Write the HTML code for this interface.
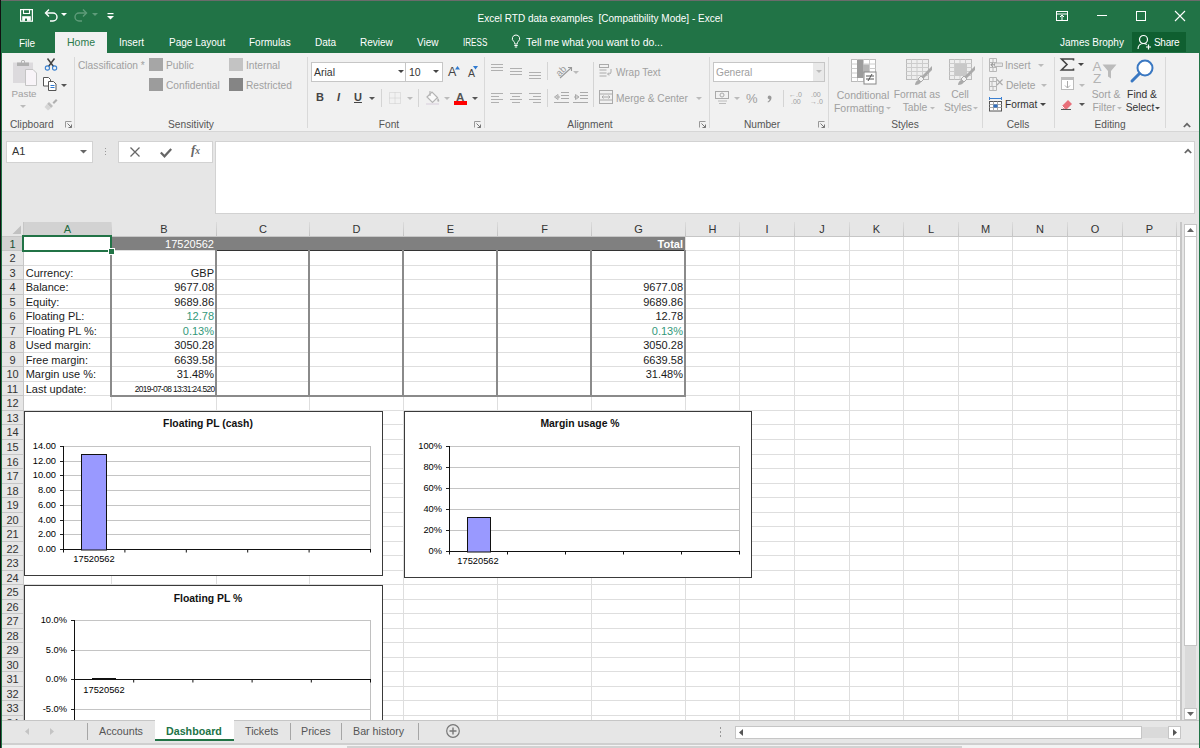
<!DOCTYPE html>
<html><head><meta charset="utf-8"><style>
html,body{margin:0;padding:0;width:1200px;height:748px;overflow:hidden;background:#fff;position:relative}
body{font-family:"Liberation Sans",sans-serif}
.t{position:absolute;white-space:nowrap;line-height:1.15}
svg{overflow:visible}
</style></head><body>
<div style="position:absolute;left:0px;top:0px;width:1200px;height:53px;background:#217346"></div>
<div style="position:absolute;left:0px;top:0px;width:1200px;height:1px;background:#6b6b6b"></div>
<svg style="position:absolute;left:20px;top:9px;" width="13" height="13" viewBox="0 0 13 13"><rect x="0.6" y="0.6" width="11.8" height="11.6" fill="none" stroke="#fff" stroke-width="1.2"/><rect x="3.5" y="0.5" width="6" height="4" fill="none" stroke="#fff" stroke-width="1.1"/><rect x="2.2" y="7.2" width="8.6" height="4.6" fill="#fff"/><rect x="5" y="9.6" width="2" height="2.4" fill="#217346"/></svg>
<svg style="position:absolute;left:44px;top:8px;" width="16" height="14" viewBox="0 0 16 14"><path d="M2 5h7a4 4 0 0 1 0 8H6" fill="none" stroke="#fff" stroke-width="1.4"/><path d="M5 1.5L1.5 5 5 8.5" fill="none" stroke="#fff" stroke-width="1.4"/></svg>
<svg style="position:absolute;left:61px;top:13px;" width="6" height="4" viewBox="0 0 6 4"><path d="M0 0h6l-3 3z" fill="#fff"/></svg>
<svg style="position:absolute;left:74px;top:8px;" width="14" height="14" viewBox="0 0 14 14"><path d="M12 5H5a4 4 0 0 0 0 8h3" fill="none" stroke="#5f9c7a" stroke-width="1.4"/><path d="M9 1.5L12.5 5 9 8.5" fill="none" stroke="#5f9c7a" stroke-width="1.4"/></svg>
<svg style="position:absolute;left:92px;top:13px;" width="6" height="4" viewBox="0 0 6 4"><path d="M0 0h6l-3 3z" fill="#5f9c7a"/></svg>
<svg style="position:absolute;left:107px;top:13px;" width="7" height="8" viewBox="0 0 7 8"><rect x="0.5" y="0" width="6" height="1.2" fill="#fff"/><path d="M0 3h7l-3.5 3.5z" fill="#fff"/></svg>
<div class="t" style="left:450px;width:300px;text-align:center;top:13px;font-size:10px;color:#fff;">Excel RTD data examples&nbsp; [Compatibility Mode] - Excel</div>
<svg style="position:absolute;left:1056px;top:11px;" width="12" height="10" viewBox="0 0 12 10"><rect x="0.5" y="0.5" width="11" height="9" fill="none" stroke="#fff"/><path d="M0.5 3h11M6 4v5.5M4 6l2-2 2 2" fill="none" stroke="#fff"/></svg>
<div style="position:absolute;left:1097px;top:15px;width:10px;height:1px;background:#fff"></div>
<div style="position:absolute;left:1136px;top:11px;width:9.5px;height:9.5px;border:1px solid #fff;box-sizing:border-box"></div>
<svg style="position:absolute;left:1175px;top:11px;" width="10" height="10" viewBox="0 0 10 10"><path d="M0 0L10 10M10 0L0 10" stroke="#fff" stroke-width="1.1"/></svg>
<div class="t" style="left:19px;top:37.5px;font-size:10px;color:#fff;">File</div>
<div class="t" style="left:119px;top:36.8px;font-size:10px;color:#fff;">Insert</div>
<div class="t" style="left:169px;top:36.8px;font-size:10px;color:#fff;">Page Layout</div>
<div class="t" style="left:249px;top:36.8px;font-size:10px;color:#fff;">Formulas</div>
<div class="t" style="left:315px;top:36.8px;font-size:10px;color:#fff;">Data</div>
<div class="t" style="left:360px;top:36.8px;font-size:10px;color:#fff;">Review</div>
<div class="t" style="left:417px;top:36.8px;font-size:10px;color:#fff;">View</div>
<div class="t" style="left:463px;top:36.8px;font-size:10px;color:#fff;transform:scaleX(0.81);transform-origin:0 0">IRESS</div>
<div style="position:absolute;left:55px;top:32px;width:52px;height:22px;background:#f1f1f1"></div>
<div class="t" style="left:67px;top:35.8px;font-size:10.5px;color:#2a7a4c;">Home</div>
<svg style="position:absolute;left:511px;top:34px;" width="10" height="14" viewBox="0 0 10 14"><path d="M5 1a3.6 3.6 0 0 0-2.2 6.5c.6.6.8 1.2.8 2V10h2.8v-.5c0-.8.2-1.4.8-2A3.6 3.6 0 0 0 5 1z" fill="none" stroke="#fff" stroke-width="1"/><path d="M3.3 11.5h3.4M3.8 13h2.4" stroke="#fff"/></svg>
<div class="t" style="left:526px;top:36.5px;font-size:10.4px;color:#fff;">Tell me what you want to do...</div>
<div class="t" style="left:1060px;top:37px;font-size:10px;color:#fff;">James Brophy</div>
<div style="position:absolute;left:1132px;top:32px;width:54px;height:20px;background:#0f5f30"></div>
<svg style="position:absolute;left:1137px;top:34px;" width="15" height="16" viewBox="0 0 15 16"><circle cx="6.5" cy="5.5" r="4" fill="none" stroke="#fff" stroke-width="1.2"/><path d="M1 15c0-3.5 2.5-5.5 5.5-5.5 1.5 0 2.5.4 3.3 1" fill="none" stroke="#fff" stroke-width="1.2"/><path d="M11.5 10.5v5M9 13h5" stroke="#fff" stroke-width="1.2"/></svg>
<div class="t" style="left:1154px;top:37px;font-size:10px;color:#fff;letter-spacing:-0.3px">Share</div>
<div style="position:absolute;left:2px;top:53px;width:1197px;height:78px;background:#f1f1f1"></div>
<div style="position:absolute;left:2px;top:131px;width:1197px;height:1px;background:#d6d6d6"></div>
<div style="position:absolute;left:74px;top:57px;width:1px;height:71px;background:#d9d9d9"></div>
<div style="position:absolute;left:307px;top:57px;width:1px;height:71px;background:#d9d9d9"></div>
<div style="position:absolute;left:484px;top:57px;width:1px;height:71px;background:#d9d9d9"></div>
<div style="position:absolute;left:709px;top:57px;width:1px;height:71px;background:#d9d9d9"></div>
<div style="position:absolute;left:828px;top:57px;width:1px;height:71px;background:#d9d9d9"></div>
<div style="position:absolute;left:982px;top:57px;width:1px;height:71px;background:#d9d9d9"></div>
<div style="position:absolute;left:1054px;top:57px;width:1px;height:71px;background:#d9d9d9"></div>
<div style="position:absolute;left:1165px;top:57px;width:1px;height:71px;background:#d9d9d9"></div>
<div class="t" style="left:10px;top:119px;font-size:10.2px;color:#555;">Clipboard</div>
<div class="t" style="left:41px;width:300px;text-align:center;top:119px;font-size:10.2px;color:#555;">Sensitivity</div>
<div class="t" style="left:239px;width:300px;text-align:center;top:119px;font-size:10.2px;color:#555;">Font</div>
<div class="t" style="left:440px;width:300px;text-align:center;top:119px;font-size:10.2px;color:#555;">Alignment</div>
<div class="t" style="left:612px;width:300px;text-align:center;top:119px;font-size:10.2px;color:#555;">Number</div>
<div class="t" style="left:755px;width:300px;text-align:center;top:119px;font-size:10.2px;color:#555;">Styles</div>
<div class="t" style="left:868px;width:300px;text-align:center;top:119px;font-size:10.2px;color:#555;">Cells</div>
<div class="t" style="left:960px;width:300px;text-align:center;top:119px;font-size:10.2px;color:#555;">Editing</div>
<svg style="position:absolute;left:65px;top:121px;" width="7" height="7" viewBox="0 0 7 7"><path d="M0.5 6.5V0.5h6" fill="none" stroke="#999"/><path d="M2.5 2.5L6.5 6.5M3.5 6.5h3v-3" fill="none" stroke="#777"/></svg>
<svg style="position:absolute;left:474px;top:121px;" width="7" height="7" viewBox="0 0 7 7"><path d="M0.5 6.5V0.5h6" fill="none" stroke="#999"/><path d="M2.5 2.5L6.5 6.5M3.5 6.5h3v-3" fill="none" stroke="#777"/></svg>
<svg style="position:absolute;left:699px;top:121px;" width="7" height="7" viewBox="0 0 7 7"><path d="M0.5 6.5V0.5h6" fill="none" stroke="#999"/><path d="M2.5 2.5L6.5 6.5M3.5 6.5h3v-3" fill="none" stroke="#777"/></svg>
<svg style="position:absolute;left:818px;top:121px;" width="7" height="7" viewBox="0 0 7 7"><path d="M0.5 6.5V0.5h6" fill="none" stroke="#999"/><path d="M2.5 2.5L6.5 6.5M3.5 6.5h3v-3" fill="none" stroke="#777"/></svg>
<svg style="position:absolute;left:1183px;top:122px;" width="8" height="6" viewBox="0 0 8 6"><path d="M0.8 5L4 1.8 7.2 5" fill="none" stroke="#666" stroke-width="1.7"/></svg>
<svg style="position:absolute;left:13px;top:60px;" width="25" height="26" viewBox="0 0 25 26"><path d="M0 2.5h20v20.5H0z" fill="#dcdadd"/><path d="M4 2.5h12v3.5H4z" fill="#b0b0b0"/><rect x="8" y="0" width="4" height="3.5" rx="1.5" fill="#b0b0b0"/><rect x="9" y="1" width="2" height="1.6" fill="#f1f1f1"/><path d="M12.5 9.5h7.5l3.5 3.5v12.5h-11z" fill="#f8f4f8" stroke="#c4c4c4"/></svg>
<div class="t" style="left:11.5px;top:88.3px;font-size:9.8px;color:#a0a0a0;">Paste</div>
<svg style="position:absolute;left:20px;top:105px;" width="6" height="4" viewBox="0 0 6 4"><path d="M0 0h6l-3 3z" fill="#bbb"/></svg>
<svg style="position:absolute;left:44px;top:58px;" width="14" height="13" viewBox="0 0 14 13"><path d="M3.5 0.5L9.5 8.5M10.5 0.5L4.5 8.5" stroke="#444" stroke-width="1.5"/><circle cx="3.4" cy="10" r="2.1" fill="none" stroke="#3b82d0" stroke-width="1.1"/><circle cx="10.6" cy="10" r="2.1" fill="none" stroke="#3b82d0" stroke-width="1.1"/></svg>
<svg style="position:absolute;left:43px;top:77px;" width="14" height="14" viewBox="0 0 14 14"><path d="M0.5 0.5h5l2 2V9H0.5z" fill="#fff" stroke="#555"/><path d="M5.5 4.5h5l2.5 2.5v6.5H5.5z" fill="#fff" stroke="#555"/><path d="M7.5 8.5h4M7.5 10.5h4" stroke="#2f7ad1"/></svg>
<svg style="position:absolute;left:61px;top:84px;" width="6" height="4" viewBox="0 0 6 4"><path d="M0 0h6l-3 3z" fill="#555"/></svg>
<svg style="position:absolute;left:44px;top:97px;" width="14" height="14" viewBox="0 0 14 14"><path d="M8.5 5.5L12 2l1.5 1.5L10 7z" fill="#b0b0b0"/><path d="M5 5l4 4-2 2-4-4z" fill="#bdbdbd"/><path d="M3 7l4 4-3 2.5L0.5 10z" fill="#d6d6d6"/></svg>
<div class="t" style="left:78px;top:60px;font-size:10.2px;color:#a0a0a0;">Classification *</div>
<div style="position:absolute;left:149px;top:58px;width:14px;height:13px;background:#a6a6a6"></div>
<div class="t" style="left:166px;top:60px;font-size:10.2px;color:#a0a0a0;">Public</div>
<div style="position:absolute;left:229px;top:58px;width:14px;height:13px;background:#c3c3c3"></div>
<div class="t" style="left:246px;top:60px;font-size:10.2px;color:#a0a0a0;">Internal</div>
<div style="position:absolute;left:149px;top:78px;width:14px;height:13px;background:#9c9c9c"></div>
<div class="t" style="left:166px;top:80px;font-size:10.2px;color:#a0a0a0;">Confidential</div>
<div style="position:absolute;left:229px;top:78px;width:14px;height:13px;background:#858585"></div>
<div class="t" style="left:246px;top:80px;font-size:10.2px;color:#a0a0a0;">Restricted</div>
<div style="position:absolute;left:311px;top:62px;width:95px;height:20px;background:#fff;border:1px solid #c6c6c6;box-sizing:border-box"></div>
<div class="t" style="left:314px;top:66px;font-size:10.5px;color:#333;">Arial</div>
<svg style="position:absolute;left:398px;top:70px;" width="6" height="4" viewBox="0 0 6 4"><path d="M0 0h6l-3 3z" fill="#444"/></svg>
<div style="position:absolute;left:405px;top:62px;width:38px;height:20px;background:#fff;border:1px solid #c6c6c6;box-sizing:border-box"></div>
<div class="t" style="left:409px;top:66px;font-size:10.5px;color:#333;">10</div>
<svg style="position:absolute;left:433px;top:70px;" width="6" height="4" viewBox="0 0 6 4"><path d="M0 0h6l-3 3z" fill="#444"/></svg>
<div class="t" style="left:448px;top:65px;font-size:12.5px;color:#444;">A</div>
<svg style="position:absolute;left:455px;top:65.5px;" width="5" height="4" viewBox="0 0 5 4"><path d="M0 3.5L2.5 0 5 3.5z" fill="#2f7ad1"/></svg>
<div class="t" style="left:468px;top:67px;font-size:10.5px;color:#444;">A</div>
<svg style="position:absolute;left:473px;top:65.5px;" width="5" height="4" viewBox="0 0 5 4"><path d="M0 0h5L2.5 3.5z" fill="#2f7ad1"/></svg>
<div class="t" style="left:316px;top:91px;font-size:11px;color:#444;font-weight:bold">B</div>
<div class="t" style="left:337px;top:91px;font-size:11px;color:#444;font-style:italic;font-weight:bold">I</div>
<div class="t" style="left:354px;top:91px;font-size:11px;color:#444;text-decoration:underline;font-weight:bold">U</div>
<svg style="position:absolute;left:369px;top:97px;" width="6" height="4" viewBox="0 0 6 4"><path d="M0 0h6l-3 3z" fill="#555"/></svg>
<div style="position:absolute;left:381px;top:89px;width:1px;height:18px;background:#d4d4d4"></div>
<svg style="position:absolute;left:389px;top:92px;" width="12" height="12" viewBox="0 0 12 12"><rect x="0.5" y="0.5" width="11" height="11" fill="none" stroke="#ccc" stroke-dasharray="1 1"/><path d="M6 0.5v11M0.5 6h11" stroke="#ccc" stroke-dasharray="1 1"/></svg>
<svg style="position:absolute;left:407px;top:97px;" width="6" height="4" viewBox="0 0 6 4"><path d="M0 0h6l-3 3z" fill="#bbb"/></svg>
<div style="position:absolute;left:418px;top:89px;width:1px;height:18px;background:#d4d4d4"></div>
<svg style="position:absolute;left:425px;top:90px;" width="16" height="16" viewBox="0 0 16 16"><path d="M2 7l5-5 5.5 5.5-5 5z" fill="#fafafa" stroke="#b4b4b4" stroke-width="1.2"/><path d="M5 1v5" stroke="#b4b4b4" stroke-width="1.2"/><path d="M12.5 7.5c1.2 1.3 1.8 2.5 1.8 3.3a1 1 0 0 1-2 0c0-.8.2-1.6.2-3.3z" fill="#b4b4b4"/><rect x="1" y="13" width="13" height="2" fill="#e4dfe6"/></svg>
<svg style="position:absolute;left:444px;top:97px;" width="6" height="4" viewBox="0 0 6 4"><path d="M0 0h6l-3 3z" fill="#bbb"/></svg>
<div class="t" style="left:456px;top:91px;font-size:11.5px;color:#555;font-weight:bold">A</div>
<div style="position:absolute;left:454px;top:101px;width:13px;height:3.5px;background:#ff0000"></div>
<svg style="position:absolute;left:472px;top:97px;" width="6" height="4" viewBox="0 0 6 4"><path d="M0 0h6l-3 3z" fill="#555"/></svg>
<svg style="position:absolute;left:491px;top:64px;" width="14" height="9" viewBox="0 0 14 9"><rect x="0" y="0" width="12" height="1" fill="#b0b0b0"/><rect x="0" y="3" width="12" height="1" fill="#b0b0b0"/><rect x="0" y="6" width="12" height="1" fill="#b0b0b0"/></svg>
<svg style="position:absolute;left:510px;top:68px;" width="14" height="9" viewBox="0 0 14 9"><rect x="0" y="0" width="12" height="1" fill="#b0b0b0"/><rect x="0" y="3" width="12" height="1" fill="#b0b0b0"/><rect x="0" y="6" width="12" height="1" fill="#b0b0b0"/></svg>
<svg style="position:absolute;left:529px;top:72px;" width="14" height="9" viewBox="0 0 14 9"><rect x="0" y="0" width="12" height="1" fill="#b0b0b0"/><rect x="0" y="3" width="12" height="1" fill="#b0b0b0"/><rect x="0" y="6" width="12" height="1" fill="#b0b0b0"/></svg>
<svg style="position:absolute;left:491px;top:93px;" width="14" height="12" viewBox="0 0 14 12"><rect x="0" y="0" width="12" height="1" fill="#b0b0b0"/><rect x="0" y="3" width="8" height="1" fill="#b0b0b0"/><rect x="0" y="6" width="12" height="1" fill="#b0b0b0"/><rect x="0" y="9" width="8" height="1" fill="#b0b0b0"/></svg>
<svg style="position:absolute;left:510px;top:93px;" width="14" height="12" viewBox="0 0 14 12"><rect x="0" y="0" width="12" height="1" fill="#b0b0b0"/><rect x="2" y="3" width="8" height="1" fill="#b0b0b0"/><rect x="0" y="6" width="12" height="1" fill="#b0b0b0"/><rect x="2" y="9" width="8" height="1" fill="#b0b0b0"/></svg>
<svg style="position:absolute;left:529px;top:93px;" width="14" height="12" viewBox="0 0 14 12"><rect x="0" y="0" width="12" height="1" fill="#b0b0b0"/><rect x="4" y="3" width="8" height="1" fill="#b0b0b0"/><rect x="0" y="6" width="12" height="1" fill="#b0b0b0"/><rect x="4" y="9" width="8" height="1" fill="#b0b0b0"/></svg>
<div style="position:absolute;left:547px;top:62px;width:1px;height:18px;background:#d4d4d4"></div>
<div style="position:absolute;left:547px;top:89px;width:1px;height:18px;background:#d4d4d4"></div>
<svg style="position:absolute;left:555px;top:63px;" width="17" height="15" viewBox="0 0 17 15"><text x="0" y="11" font-size="9.5" font-family="Liberation Sans" fill="#999" transform="rotate(-45 6 7)">ab</text><path d="M5 15L16 5M13 4.5H16.5V8" fill="none" stroke="#999" stroke-width="1.1"/></svg>
<svg style="position:absolute;left:573px;top:71px;" width="6" height="4" viewBox="0 0 6 4"><path d="M0 0h6l-3 3z" fill="#bbb"/></svg>
<svg style="position:absolute;left:554px;top:92px;" width="15" height="12" viewBox="0 0 15 12"><path d="M7 0.5h8M7 3.5h8M7 6.5h8M0 10.5h15M0.5 5L4 2.5v5z M2 5h4" fill="none" stroke="#aaa"/></svg>
<svg style="position:absolute;left:573px;top:92px;" width="15" height="12" viewBox="0 0 15 12"><path d="M7 0.5h8M7 3.5h8M7 6.5h8M0 10.5h15M6 5L2.5 2.5v5z M1 5h4" fill="none" stroke="#aaa"/></svg>
<div style="position:absolute;left:593px;top:62px;width:1px;height:45px;background:#d4d4d4"></div>
<svg style="position:absolute;left:599px;top:64px;" width="14" height="14" viewBox="0 0 14 14"><rect x="0.5" y="0.5" width="9" height="3" fill="none" stroke="#aaa"/><path d="M0.5 6h7M0.5 9h7M0.5 12h7M12 5v3a2 2 0 0 1-2 2H9M10 8.5L8.5 10 10 11.5" fill="none" stroke="#aaa"/></svg>
<div class="t" style="left:616px;top:67px;font-size:10px;color:#a0a0a0;">Wrap Text</div>
<svg style="position:absolute;left:599px;top:90px;" width="14" height="14" viewBox="0 0 14 14"><rect x="0.5" y="0.5" width="13" height="13" fill="none" stroke="#aaa"/><path d="M0.5 4h13M0.5 10h13M3 7h8M4.5 5.5L3 7l1.5 1.5M9.5 5.5L11 7 9.5 8.5" fill="none" stroke="#aaa"/></svg>
<div class="t" style="left:616px;top:93px;font-size:10.2px;color:#a0a0a0;">Merge &amp; Center</div>
<svg style="position:absolute;left:696px;top:97px;" width="6" height="4" viewBox="0 0 6 4"><path d="M0 0h6l-3 3z" fill="#bbb"/></svg>
<div style="position:absolute;left:713px;top:62px;width:112px;height:20px;background:#fff;border:1px solid #c6c6c6;box-sizing:border-box"></div>
<div style="position:absolute;left:813px;top:63px;width:11px;height:18px;background:#e9e9e9"></div>
<div class="t" style="left:716px;top:67px;font-size:10.2px;color:#a0a0a0;">General</div>
<svg style="position:absolute;left:816px;top:70px;" width="6" height="4" viewBox="0 0 6 4"><path d="M0 0h6l-3 3z" fill="#bbb"/></svg>
<svg style="position:absolute;left:715px;top:91px;" width="15" height="14" viewBox="0 0 15 14"><rect x="0.5" y="0.5" width="13" height="7" fill="none" stroke="#aaa"/><circle cx="7" cy="4" r="2" fill="none" stroke="#aaa"/><path d="M3 10h9M4 12.5h7" stroke="#bbb"/></svg>
<svg style="position:absolute;left:734px;top:97px;" width="6" height="4" viewBox="0 0 6 4"><path d="M0 0h6l-3 3z" fill="#bbb"/></svg>
<div class="t" style="left:746px;top:91.5px;font-size:13px;color:#a0a0a0;">%</div>
<svg style="position:absolute;left:766px;top:95px;" width="6" height="8" viewBox="0 0 6 8"><path d="M3.2 0.5c1.6 0 2.3 1 2.3 2.2 0 2-1.3 3.8-3.5 4.8l-.5-.8c1.2-.7 2-1.5 2-2.5-.9 0-1.8-.6-1.8-1.7 0-1.1.8-2 1.5-2z" fill="#999"/></svg>
<div style="position:absolute;left:783px;top:90px;width:1px;height:17px;background:#d4d4d4"></div>
<div class="t" style="left:789px;top:91px;font-size:7px;color:#a0a0a0;">&#8592;.0</div>
<div class="t" style="left:791px;top:98px;font-size:7px;color:#a0a0a0;">.00</div>
<div class="t" style="left:811px;top:91px;font-size:7px;color:#a0a0a0;">.00</div>
<div class="t" style="left:810px;top:98px;font-size:7px;color:#a0a0a0;">&#8594;.0</div>
<svg style="position:absolute;left:851px;top:59px;" width="26" height="26" viewBox="0 0 26 26"><rect x="0.5" y="0.5" width="24" height="22" fill="#fff" stroke="#bbb"/><path d="M6.5 0.5v22" stroke="#ccc"/><path d="M12.5 0.5v22" stroke="#ccc"/><path d="M18.5 0.5v22" stroke="#ccc"/><path d="M0.5 5.0h24" stroke="#ccc"/><path d="M0.5 9.5h24" stroke="#ccc"/><path d="M0.5 14.0h24" stroke="#ccc"/><path d="M0.5 18.5h24" stroke="#ccc"/><rect x="6" y="1" width="6" height="18" fill="#9c9c9c"/><rect x="12" y="5.5" width="6" height="9" fill="#b5b5b5"/><rect x="13" y="13" width="12" height="12" fill="#fff" stroke="#888"/><path d="M15 17h8M15 20h8M21 15l-4 7" stroke="#555"/></svg>
<svg style="position:absolute;left:906px;top:59px;" width="27" height="27" viewBox="0 0 27 27"><rect x="0.5" y="0.5" width="22" height="20" fill="#eee" stroke="#bbb"/><path d="M5.5 0.5v20" stroke="#ccc"/><path d="M11.0 0.5v20" stroke="#ccc"/><path d="M16.5 0.5v20" stroke="#ccc"/><path d="M0.5 4.5h22" stroke="#ccc"/><path d="M0.5 8.5h22" stroke="#ccc"/><path d="M0.5 12.5h22" stroke="#ccc"/><path d="M0.5 16.5h22" stroke="#ccc"/><path d="M15 18L26 7v4L17 20z" fill="#aaa"/><path d="M12 20l3-3 3 3-3 3z" fill="#f1f1f1" stroke="#aaa"/><path d="M9 26c0-3 2-5 4-5l2 2c-1 2-3 3-6 3z" fill="#aaa"/></svg>
<svg style="position:absolute;left:949px;top:59px;" width="27" height="27" viewBox="0 0 27 27"><rect x="0.5" y="0.5" width="22" height="20" fill="#eee" stroke="#bbb"/><path d="M5.5 0.5v20" stroke="#ccc"/><path d="M11.0 0.5v20" stroke="#ccc"/><path d="M16.5 0.5v20" stroke="#ccc"/><path d="M0.5 4.5h22" stroke="#ccc"/><path d="M0.5 8.5h22" stroke="#ccc"/><path d="M0.5 12.5h22" stroke="#ccc"/><path d="M0.5 16.5h22" stroke="#ccc"/><rect x="6" y="5" width="12" height="12" fill="#c8c8c8"/><path d="M15 18L26 7v4L17 20z" fill="#aaa"/><path d="M12 20l3-3 3 3-3 3z" fill="#f1f1f1" stroke="#aaa"/><path d="M9 26c0-3 2-5 4-5l2 2c-1 2-3 3-6 3z" fill="#aaa"/></svg>
<div class="t" style="left:713px;width:300px;text-align:center;top:89px;font-size:10.5px;color:#a0a0a0;">Conditional</div>
<div class="t" style="left:709px;width:300px;text-align:center;top:102px;font-size:10.5px;color:#a0a0a0;">Formatting</div>
<div class="t" style="left:767px;width:300px;text-align:center;top:89px;font-size:10.3px;color:#a0a0a0;">Format as</div>
<div class="t" style="left:765px;width:300px;text-align:center;top:102px;font-size:10.3px;color:#a0a0a0;">Table</div>
<div class="t" style="left:810px;width:300px;text-align:center;top:89px;font-size:10.3px;color:#a0a0a0;">Cell</div>
<div class="t" style="left:808px;width:300px;text-align:center;top:102px;font-size:10.3px;color:#a0a0a0;">Styles</div>
<svg style="position:absolute;left:886px;top:107px;" width="5" height="3" viewBox="0 0 5 3"><path d="M0 0h5l-2.5 2.5z" fill="#bbb"/></svg>
<svg style="position:absolute;left:930px;top:107px;" width="5" height="3" viewBox="0 0 5 3"><path d="M0 0h5l-2.5 2.5z" fill="#bbb"/></svg>
<svg style="position:absolute;left:973px;top:107px;" width="5" height="3" viewBox="0 0 5 3"><path d="M0 0h5l-2.5 2.5z" fill="#bbb"/></svg>
<svg style="position:absolute;left:989px;top:58px;" width="15" height="14" viewBox="0 0 15 14"><path d="M0.5 0.5h7v13h-7zM0.5 4.5h7M0.5 9.5h7M4 0.5v4M4 9.5v4" fill="none" stroke="#b8b8b8"/><path d="M5.5 5h8v3.5h-8z" fill="#e6e6e6" stroke="#b8b8b8"/><path d="M2 6.8h4M4 4.8L2 6.8 4 8.8" fill="none" stroke="#999" stroke-width="1.1"/></svg>
<div class="t" style="left:1005px;top:60px;font-size:10.2px;color:#a0a0a0;">Insert</div>
<svg style="position:absolute;left:1038px;top:64px;" width="6" height="4" viewBox="0 0 6 4"><path d="M0 0h6l-3 3z" fill="#bbb"/></svg>
<svg style="position:absolute;left:989px;top:77px;" width="15" height="14" viewBox="0 0 15 14"><path d="M0.5 0.5h7v13h-7zM0.5 4.5h7M0.5 9.5h7M4 0.5v4M4 9.5v4M3 5v4" fill="none" stroke="#b8b8b8"/><path d="M8 2.5l5.5 5.5M13.5 2.5L8 8" stroke="#aaa" stroke-width="1.1"/></svg>
<div class="t" style="left:1006px;top:80px;font-size:10.2px;color:#a0a0a0;">Delete</div>
<svg style="position:absolute;left:1041px;top:84px;" width="6" height="4" viewBox="0 0 6 4"><path d="M0 0h6l-3 3z" fill="#bbb"/></svg>
<svg style="position:absolute;left:989px;top:97px;" width="14" height="15" viewBox="0 0 14 15"><path d="M0.5 1.5h12M0.5 0v3M12.5 0v3" stroke="#3b7fd0"/><rect x="0.5" y="4.5" width="12" height="9.5" fill="#fff" stroke="#555"/><path d="M0.5 7.5h12M0.5 10.5h12M4.5 4.5v9.5M8.5 4.5v9.5" stroke="#aaa"/><rect x="4.5" y="7.5" width="4" height="3" fill="#2f6fc0"/></svg>
<div class="t" style="left:1005px;top:99px;font-size:10.2px;color:#333;">Format</div>
<svg style="position:absolute;left:1040px;top:103px;" width="6" height="4" viewBox="0 0 6 4"><path d="M0 0h6l-3 3z" fill="#444"/></svg>
<svg style="position:absolute;left:1060px;top:58px;" width="15" height="13" viewBox="0 0 15 13"><path d="M13.5 2.5V1H1.5L7 6.5 1.5 12h12v-1.5" fill="none" stroke="#444" stroke-width="1.6" stroke-linejoin="miter"/></svg>
<svg style="position:absolute;left:1078px;top:63px;" width="6" height="4" viewBox="0 0 6 4"><path d="M0 0h6l-3 3z" fill="#444"/></svg>
<svg style="position:absolute;left:1061px;top:77px;" width="14" height="14" viewBox="0 0 14 14"><rect x="0.5" y="0.5" width="12" height="12" fill="#fff" stroke="#bbb"/><rect x="0.5" y="0.5" width="12" height="2.5" fill="#bbb"/><path d="M6.5 4v7M4 8.5l2.5 2.5 2.5-2.5" fill="none" stroke="#aaa"/></svg>
<svg style="position:absolute;left:1079px;top:84px;" width="6" height="4" viewBox="0 0 6 4"><path d="M0 0h6l-3 3z" fill="#bbb"/></svg>
<svg style="position:absolute;left:1061px;top:98px;" width="14" height="12" viewBox="0 0 14 12"><path d="M1 8l6-6 4 4-6 6H3z" fill="#e8707a"/><path d="M1 8l2.5 2.5" stroke="#fff"/><path d="M0 11.5h10" stroke="#555"/></svg>
<svg style="position:absolute;left:1079px;top:103px;" width="6" height="4" viewBox="0 0 6 4"><path d="M0 0h6l-3 3z" fill="#555"/></svg>
<div class="t" style="left:1092.5px;top:58.5px;font-size:13.5px;color:#b4b4b4;">A</div>
<div class="t" style="left:1093px;top:70.5px;font-size:13.5px;color:#b4b4b4;">Z</div>
<svg style="position:absolute;left:1102px;top:64px;" width="15" height="15" viewBox="0 0 15 15"><path d="M0.5 0.5h14L9 7v7.5L6 12.5V7z" fill="#bbb"/></svg>
<div class="t" style="left:956px;width:300px;text-align:center;top:89px;font-size:10.3px;color:#a0a0a0;">Sort &amp;</div>
<div class="t" style="left:954px;width:300px;text-align:center;top:102px;font-size:10.3px;color:#a0a0a0;">Filter</div>
<svg style="position:absolute;left:1117px;top:107px;" width="5" height="3" viewBox="0 0 5 3"><path d="M0 0h5l-2.5 2.5z" fill="#bbb"/></svg>
<svg style="position:absolute;left:1130px;top:59px;" width="25" height="23" viewBox="0 0 25 23"><circle cx="15" cy="9" r="7.5" fill="#fff" stroke="#3a78c2" stroke-width="2"/><path d="M9.5 14.5L2 22" stroke="#3a78c2" stroke-width="3" stroke-linecap="round"/></svg>
<div class="t" style="left:992px;width:300px;text-align:center;top:89px;font-size:10.3px;color:#333;">Find &amp;</div>
<div class="t" style="left:990px;width:300px;text-align:center;top:102px;font-size:10.3px;color:#333;">Select</div>
<svg style="position:absolute;left:1155px;top:107px;" width="5" height="3" viewBox="0 0 5 3"><path d="M0 0h5l-2.5 2.5z" fill="#444"/></svg>
<div style="position:absolute;left:2px;top:132px;width:1197px;height:90px;background:#e6e6e6"></div>
<div style="position:absolute;left:6px;top:141px;width:87px;height:22px;background:#fff;border:1px solid #d2d2d2;box-sizing:border-box"></div>
<div class="t" style="left:12px;top:145px;font-size:11px;color:#333;">A1</div>
<svg style="position:absolute;left:80px;top:150px;" width="7" height="4" viewBox="0 0 7 4"><path d="M0 0h7l-3.5 3.5z" fill="#666"/></svg>
<div style="position:absolute;left:105px;top:148px;width:1px;height:1px;background:#999"></div>
<div style="position:absolute;left:105px;top:151px;width:1px;height:1px;background:#999"></div>
<div style="position:absolute;left:105px;top:154px;width:1px;height:1px;background:#999"></div>
<div style="position:absolute;left:118px;top:141px;width:95px;height:22px;background:#fff;border:1px solid #d2d2d2;box-sizing:border-box"></div>
<svg style="position:absolute;left:130px;top:147px;" width="10" height="10" viewBox="0 0 10 10"><path d="M0.5 0.5L9.5 9.5M9.5 0.5L0.5 9.5" stroke="#666" stroke-width="1.3"/></svg>
<svg style="position:absolute;left:160px;top:148px;" width="12" height="10" viewBox="0 0 12 10"><path d="M0.8 4.5L4.5 8.3 11.2 1" fill="none" stroke="#666" stroke-width="2.2"/></svg>
<div class="t" style="left:191px;top:143px;font-size:13px;color:#666;font-style:italic;font-weight:bold;font-family:'Liberation Serif',serif">f<span style='font-size:9.5px'>x</span></div>
<div style="position:absolute;left:215px;top:141px;width:980px;height:73px;background:#fff;border:1px solid #d2d2d2;box-sizing:border-box"></div>
<svg style="position:absolute;left:1184px;top:147.5px;" width="8" height="6" viewBox="0 0 8 6"><path d="M0.8 5L4 1.8 7.2 5" fill="none" stroke="#666" stroke-width="1.7"/></svg>
<div style="position:absolute;left:2px;top:222px;width:1180px;height:14px;background:#e6e6e6"></div>
<div style="position:absolute;left:2px;top:236px;width:21px;height:484px;background:#e6e6e6"></div>
<div style="position:absolute;left:24px;top:237px;width:1156px;height:483px;background:#fff"></div>
<div style="position:absolute;left:24px;top:222px;width:87px;height:14px;background:#d2d2d2"></div>
<div style="position:absolute;left:2px;top:237px;width:21px;height:13px;background:#d2d2d2"></div>
<div style="position:absolute;left:2px;top:236px;width:1179px;height:1px;background:#c6c6c6"></div>
<div style="position:absolute;left:23px;top:222px;width:1px;height:498px;background:#c6c6c6"></div>
<svg style="position:absolute;left:12px;top:225px;" width="10" height="10" viewBox="0 0 10 10"><path d="M9 0.5V9H0.5z" fill="#c1c1c1"/></svg>
<div style="position:absolute;left:111px;top:222px;width:1px;height:14px;background:linear-gradient(#dcdcdc,#c4c4c4)"></div>
<div style="position:absolute;left:111px;top:237px;width:1px;height:483px;background:#dedede"></div>
<div style="position:absolute;left:216px;top:222px;width:1px;height:14px;background:linear-gradient(#dcdcdc,#c4c4c4)"></div>
<div style="position:absolute;left:216px;top:237px;width:1px;height:483px;background:#dedede"></div>
<div style="position:absolute;left:309px;top:222px;width:1px;height:14px;background:linear-gradient(#dcdcdc,#c4c4c4)"></div>
<div style="position:absolute;left:309px;top:237px;width:1px;height:483px;background:#dedede"></div>
<div style="position:absolute;left:403px;top:222px;width:1px;height:14px;background:linear-gradient(#dcdcdc,#c4c4c4)"></div>
<div style="position:absolute;left:403px;top:237px;width:1px;height:483px;background:#dedede"></div>
<div style="position:absolute;left:497px;top:222px;width:1px;height:14px;background:linear-gradient(#dcdcdc,#c4c4c4)"></div>
<div style="position:absolute;left:497px;top:237px;width:1px;height:483px;background:#dedede"></div>
<div style="position:absolute;left:591px;top:222px;width:1px;height:14px;background:linear-gradient(#dcdcdc,#c4c4c4)"></div>
<div style="position:absolute;left:591px;top:237px;width:1px;height:483px;background:#dedede"></div>
<div style="position:absolute;left:685px;top:222px;width:1px;height:14px;background:linear-gradient(#dcdcdc,#c4c4c4)"></div>
<div style="position:absolute;left:685px;top:237px;width:1px;height:483px;background:#dedede"></div>
<div style="position:absolute;left:739px;top:222px;width:1px;height:14px;background:linear-gradient(#dcdcdc,#c4c4c4)"></div>
<div style="position:absolute;left:739px;top:237px;width:1px;height:483px;background:#dedede"></div>
<div style="position:absolute;left:794px;top:222px;width:1px;height:14px;background:linear-gradient(#dcdcdc,#c4c4c4)"></div>
<div style="position:absolute;left:794px;top:237px;width:1px;height:483px;background:#dedede"></div>
<div style="position:absolute;left:849px;top:222px;width:1px;height:14px;background:linear-gradient(#dcdcdc,#c4c4c4)"></div>
<div style="position:absolute;left:849px;top:237px;width:1px;height:483px;background:#dedede"></div>
<div style="position:absolute;left:903px;top:222px;width:1px;height:14px;background:linear-gradient(#dcdcdc,#c4c4c4)"></div>
<div style="position:absolute;left:903px;top:237px;width:1px;height:483px;background:#dedede"></div>
<div style="position:absolute;left:958px;top:222px;width:1px;height:14px;background:linear-gradient(#dcdcdc,#c4c4c4)"></div>
<div style="position:absolute;left:958px;top:237px;width:1px;height:483px;background:#dedede"></div>
<div style="position:absolute;left:1012px;top:222px;width:1px;height:14px;background:linear-gradient(#dcdcdc,#c4c4c4)"></div>
<div style="position:absolute;left:1012px;top:237px;width:1px;height:483px;background:#dedede"></div>
<div style="position:absolute;left:1067px;top:222px;width:1px;height:14px;background:linear-gradient(#dcdcdc,#c4c4c4)"></div>
<div style="position:absolute;left:1067px;top:237px;width:1px;height:483px;background:#dedede"></div>
<div style="position:absolute;left:1122px;top:222px;width:1px;height:14px;background:linear-gradient(#dcdcdc,#c4c4c4)"></div>
<div style="position:absolute;left:1122px;top:237px;width:1px;height:483px;background:#dedede"></div>
<div style="position:absolute;left:1176px;top:222px;width:1px;height:14px;background:linear-gradient(#dcdcdc,#c4c4c4)"></div>
<div style="position:absolute;left:1176px;top:237px;width:1px;height:483px;background:#dedede"></div>
<div class="t" style="left:-82.5px;width:300px;text-align:center;top:222.5px;font-size:11px;color:#1e6b3e;">A</div>
<div class="t" style="left:14.0px;width:300px;text-align:center;top:222.5px;font-size:11px;color:#333;">B</div>
<div class="t" style="left:113.0px;width:300px;text-align:center;top:222.5px;font-size:11px;color:#333;">C</div>
<div class="t" style="left:206.5px;width:300px;text-align:center;top:222.5px;font-size:11px;color:#333;">D</div>
<div class="t" style="left:300.5px;width:300px;text-align:center;top:222.5px;font-size:11px;color:#333;">E</div>
<div class="t" style="left:394.5px;width:300px;text-align:center;top:222.5px;font-size:11px;color:#333;">F</div>
<div class="t" style="left:488.5px;width:300px;text-align:center;top:222.5px;font-size:11px;color:#333;">G</div>
<div class="t" style="left:562.5px;width:300px;text-align:center;top:222.5px;font-size:11px;color:#333;">H</div>
<div class="t" style="left:617.0px;width:300px;text-align:center;top:222.5px;font-size:11px;color:#333;">I</div>
<div class="t" style="left:672.0px;width:300px;text-align:center;top:222.5px;font-size:11px;color:#333;">J</div>
<div class="t" style="left:726.5px;width:300px;text-align:center;top:222.5px;font-size:11px;color:#333;">K</div>
<div class="t" style="left:781.0px;width:300px;text-align:center;top:222.5px;font-size:11px;color:#333;">L</div>
<div class="t" style="left:835.5px;width:300px;text-align:center;top:222.5px;font-size:11px;color:#333;">M</div>
<div class="t" style="left:890.0px;width:300px;text-align:center;top:222.5px;font-size:11px;color:#333;">N</div>
<div class="t" style="left:945.0px;width:300px;text-align:center;top:222.5px;font-size:11px;color:#333;">O</div>
<div class="t" style="left:999.5px;width:300px;text-align:center;top:222.5px;font-size:11px;color:#333;">P</div>
<div style="position:absolute;left:24px;top:250px;width:1156px;height:1px;background:#dedede"></div>
<div style="position:absolute;left:2px;top:250px;width:21px;height:1px;background:#c6c6c6"></div>
<div style="position:absolute;left:24px;top:265px;width:1156px;height:1px;background:#dedede"></div>
<div style="position:absolute;left:2px;top:265px;width:21px;height:1px;background:#c6c6c6"></div>
<div style="position:absolute;left:24px;top:279px;width:1156px;height:1px;background:#dedede"></div>
<div style="position:absolute;left:2px;top:279px;width:21px;height:1px;background:#c6c6c6"></div>
<div style="position:absolute;left:24px;top:294px;width:1156px;height:1px;background:#dedede"></div>
<div style="position:absolute;left:2px;top:294px;width:21px;height:1px;background:#c6c6c6"></div>
<div style="position:absolute;left:24px;top:308px;width:1156px;height:1px;background:#dedede"></div>
<div style="position:absolute;left:2px;top:308px;width:21px;height:1px;background:#c6c6c6"></div>
<div style="position:absolute;left:24px;top:323px;width:1156px;height:1px;background:#dedede"></div>
<div style="position:absolute;left:2px;top:323px;width:21px;height:1px;background:#c6c6c6"></div>
<div style="position:absolute;left:24px;top:337px;width:1156px;height:1px;background:#dedede"></div>
<div style="position:absolute;left:2px;top:337px;width:21px;height:1px;background:#c6c6c6"></div>
<div style="position:absolute;left:24px;top:352px;width:1156px;height:1px;background:#dedede"></div>
<div style="position:absolute;left:2px;top:352px;width:21px;height:1px;background:#c6c6c6"></div>
<div style="position:absolute;left:24px;top:366px;width:1156px;height:1px;background:#dedede"></div>
<div style="position:absolute;left:2px;top:366px;width:21px;height:1px;background:#c6c6c6"></div>
<div style="position:absolute;left:24px;top:381px;width:1156px;height:1px;background:#dedede"></div>
<div style="position:absolute;left:2px;top:381px;width:21px;height:1px;background:#c6c6c6"></div>
<div style="position:absolute;left:24px;top:395px;width:1156px;height:1px;background:#dedede"></div>
<div style="position:absolute;left:2px;top:395px;width:21px;height:1px;background:#c6c6c6"></div>
<div style="position:absolute;left:24px;top:410px;width:1156px;height:1px;background:#dedede"></div>
<div style="position:absolute;left:2px;top:410px;width:21px;height:1px;background:#c6c6c6"></div>
<div style="position:absolute;left:24px;top:424px;width:1156px;height:1px;background:#dedede"></div>
<div style="position:absolute;left:2px;top:424px;width:21px;height:1px;background:#c6c6c6"></div>
<div style="position:absolute;left:24px;top:439px;width:1156px;height:1px;background:#dedede"></div>
<div style="position:absolute;left:2px;top:439px;width:21px;height:1px;background:#c6c6c6"></div>
<div style="position:absolute;left:24px;top:454px;width:1156px;height:1px;background:#dedede"></div>
<div style="position:absolute;left:2px;top:454px;width:21px;height:1px;background:#c6c6c6"></div>
<div style="position:absolute;left:24px;top:468px;width:1156px;height:1px;background:#dedede"></div>
<div style="position:absolute;left:2px;top:468px;width:21px;height:1px;background:#c6c6c6"></div>
<div style="position:absolute;left:24px;top:483px;width:1156px;height:1px;background:#dedede"></div>
<div style="position:absolute;left:2px;top:483px;width:21px;height:1px;background:#c6c6c6"></div>
<div style="position:absolute;left:24px;top:497px;width:1156px;height:1px;background:#dedede"></div>
<div style="position:absolute;left:2px;top:497px;width:21px;height:1px;background:#c6c6c6"></div>
<div style="position:absolute;left:24px;top:512px;width:1156px;height:1px;background:#dedede"></div>
<div style="position:absolute;left:2px;top:512px;width:21px;height:1px;background:#c6c6c6"></div>
<div style="position:absolute;left:24px;top:526px;width:1156px;height:1px;background:#dedede"></div>
<div style="position:absolute;left:2px;top:526px;width:21px;height:1px;background:#c6c6c6"></div>
<div style="position:absolute;left:24px;top:541px;width:1156px;height:1px;background:#dedede"></div>
<div style="position:absolute;left:2px;top:541px;width:21px;height:1px;background:#c6c6c6"></div>
<div style="position:absolute;left:24px;top:555px;width:1156px;height:1px;background:#dedede"></div>
<div style="position:absolute;left:2px;top:555px;width:21px;height:1px;background:#c6c6c6"></div>
<div style="position:absolute;left:24px;top:570px;width:1156px;height:1px;background:#dedede"></div>
<div style="position:absolute;left:2px;top:570px;width:21px;height:1px;background:#c6c6c6"></div>
<div style="position:absolute;left:24px;top:584px;width:1156px;height:1px;background:#dedede"></div>
<div style="position:absolute;left:2px;top:584px;width:21px;height:1px;background:#c6c6c6"></div>
<div style="position:absolute;left:24px;top:599px;width:1156px;height:1px;background:#dedede"></div>
<div style="position:absolute;left:2px;top:599px;width:21px;height:1px;background:#c6c6c6"></div>
<div style="position:absolute;left:24px;top:613px;width:1156px;height:1px;background:#dedede"></div>
<div style="position:absolute;left:2px;top:613px;width:21px;height:1px;background:#c6c6c6"></div>
<div style="position:absolute;left:24px;top:628px;width:1156px;height:1px;background:#dedede"></div>
<div style="position:absolute;left:2px;top:628px;width:21px;height:1px;background:#c6c6c6"></div>
<div style="position:absolute;left:24px;top:642px;width:1156px;height:1px;background:#dedede"></div>
<div style="position:absolute;left:2px;top:642px;width:21px;height:1px;background:#c6c6c6"></div>
<div style="position:absolute;left:24px;top:657px;width:1156px;height:1px;background:#dedede"></div>
<div style="position:absolute;left:2px;top:657px;width:21px;height:1px;background:#c6c6c6"></div>
<div style="position:absolute;left:24px;top:671px;width:1156px;height:1px;background:#dedede"></div>
<div style="position:absolute;left:2px;top:671px;width:21px;height:1px;background:#c6c6c6"></div>
<div style="position:absolute;left:24px;top:686px;width:1156px;height:1px;background:#dedede"></div>
<div style="position:absolute;left:2px;top:686px;width:21px;height:1px;background:#c6c6c6"></div>
<div style="position:absolute;left:24px;top:700px;width:1156px;height:1px;background:#dedede"></div>
<div style="position:absolute;left:2px;top:700px;width:21px;height:1px;background:#c6c6c6"></div>
<div style="position:absolute;left:24px;top:715px;width:1156px;height:1px;background:#dedede"></div>
<div style="position:absolute;left:2px;top:715px;width:21px;height:1px;background:#c6c6c6"></div>
<div class="t" style="left:-137.5px;width:300px;text-align:center;top:237.8px;font-size:11px;color:#1a4f33;">1</div>
<div class="t" style="left:-137.5px;width:300px;text-align:center;top:251.8px;font-size:11px;color:#333;">2</div>
<div class="t" style="left:-137.5px;width:300px;text-align:center;top:266.8px;font-size:11px;color:#333;">3</div>
<div class="t" style="left:-137.5px;width:300px;text-align:center;top:280.8px;font-size:11px;color:#333;">4</div>
<div class="t" style="left:-137.5px;width:300px;text-align:center;top:295.8px;font-size:11px;color:#333;">5</div>
<div class="t" style="left:-137.5px;width:300px;text-align:center;top:309.8px;font-size:11px;color:#333;">6</div>
<div class="t" style="left:-137.5px;width:300px;text-align:center;top:324.8px;font-size:11px;color:#333;">7</div>
<div class="t" style="left:-137.5px;width:300px;text-align:center;top:338.8px;font-size:11px;color:#333;">8</div>
<div class="t" style="left:-137.5px;width:300px;text-align:center;top:353.8px;font-size:11px;color:#333;">9</div>
<div class="t" style="left:-137.5px;width:300px;text-align:center;top:367.8px;font-size:11px;color:#333;">10</div>
<div class="t" style="left:-137.5px;width:300px;text-align:center;top:382.8px;font-size:11px;color:#333;">11</div>
<div class="t" style="left:-137.5px;width:300px;text-align:center;top:396.8px;font-size:11px;color:#333;">12</div>
<div class="t" style="left:-137.5px;width:300px;text-align:center;top:411.8px;font-size:11px;color:#333;">13</div>
<div class="t" style="left:-137.5px;width:300px;text-align:center;top:425.8px;font-size:11px;color:#333;">14</div>
<div class="t" style="left:-137.5px;width:300px;text-align:center;top:440.8px;font-size:11px;color:#333;">15</div>
<div class="t" style="left:-137.5px;width:300px;text-align:center;top:455.8px;font-size:11px;color:#333;">16</div>
<div class="t" style="left:-137.5px;width:300px;text-align:center;top:469.8px;font-size:11px;color:#333;">17</div>
<div class="t" style="left:-137.5px;width:300px;text-align:center;top:484.8px;font-size:11px;color:#333;">18</div>
<div class="t" style="left:-137.5px;width:300px;text-align:center;top:498.8px;font-size:11px;color:#333;">19</div>
<div class="t" style="left:-137.5px;width:300px;text-align:center;top:513.8px;font-size:11px;color:#333;">20</div>
<div class="t" style="left:-137.5px;width:300px;text-align:center;top:527.8px;font-size:11px;color:#333;">21</div>
<div class="t" style="left:-137.5px;width:300px;text-align:center;top:542.8px;font-size:11px;color:#333;">22</div>
<div class="t" style="left:-137.5px;width:300px;text-align:center;top:556.8px;font-size:11px;color:#333;">23</div>
<div class="t" style="left:-137.5px;width:300px;text-align:center;top:571.8px;font-size:11px;color:#333;">24</div>
<div class="t" style="left:-137.5px;width:300px;text-align:center;top:585.8px;font-size:11px;color:#333;">25</div>
<div class="t" style="left:-137.5px;width:300px;text-align:center;top:600.8px;font-size:11px;color:#333;">26</div>
<div class="t" style="left:-137.5px;width:300px;text-align:center;top:614.8px;font-size:11px;color:#333;">27</div>
<div class="t" style="left:-137.5px;width:300px;text-align:center;top:629.8px;font-size:11px;color:#333;">28</div>
<div class="t" style="left:-137.5px;width:300px;text-align:center;top:643.8px;font-size:11px;color:#333;">29</div>
<div class="t" style="left:-137.5px;width:300px;text-align:center;top:658.8px;font-size:11px;color:#333;">30</div>
<div class="t" style="left:-137.5px;width:300px;text-align:center;top:672.8px;font-size:11px;color:#333;">31</div>
<div class="t" style="left:-137.5px;width:300px;text-align:center;top:687.8px;font-size:11px;color:#333;">32</div>
<div class="t" style="left:-137.5px;width:300px;text-align:center;top:701.8px;font-size:11px;color:#333;">33</div>
<div class="t" style="left:-137.5px;width:300px;text-align:center;top:716.8px;font-size:11px;color:#333;">34</div>
<div style="position:absolute;left:1180px;top:222px;width:2px;height:498px;background:#c6c6c6"></div>
<div style="position:absolute;left:1182px;top:222px;width:17px;height:498px;background:#e6e6e6"></div>
<div style="position:absolute;left:111px;top:237px;width:574px;height:13px;background:#808080"></div>
<div class="t" style="left:-86px;width:300px;text-align:right;top:237.5px;font-size:11px;color:#fff;">17520562</div>
<div class="t" style="left:383px;width:300px;text-align:right;top:237.5px;font-size:11px;color:#fff;font-weight:bold">Total</div>
<div style="position:absolute;left:216px;top:250px;width:469px;height:1px;background:#333"></div>
<div style="position:absolute;left:110px;top:250px;width:2px;height:146px;background:#8a8a8a"></div>
<div style="position:absolute;left:215px;top:250px;width:2px;height:146px;background:#8a8a8a"></div>
<div style="position:absolute;left:308px;top:250px;width:2px;height:146px;background:#8a8a8a"></div>
<div style="position:absolute;left:402px;top:250px;width:2px;height:146px;background:#8a8a8a"></div>
<div style="position:absolute;left:496px;top:250px;width:2px;height:146px;background:#8a8a8a"></div>
<div style="position:absolute;left:590px;top:250px;width:2px;height:146px;background:#8a8a8a"></div>
<div style="position:absolute;left:684px;top:250px;width:2px;height:146px;background:#8a8a8a"></div>
<div style="position:absolute;left:110px;top:395px;width:576px;height:2px;background:#8a8a8a"></div>
<div class="t" style="left:25.7px;top:266.8px;font-size:11px;color:#1a1a1a;">Currency:</div>
<div class="t" style="left:-86px;width:300px;text-align:right;top:266.8px;font-size:11px;color:#1a1a1a;">GBP</div>
<div class="t" style="left:25.7px;top:280.8px;font-size:11px;color:#1a1a1a;">Balance:</div>
<div class="t" style="left:-86px;width:300px;text-align:right;top:280.8px;font-size:11px;color:#1a1a1a;">9677.08</div>
<div class="t" style="left:383px;width:300px;text-align:right;top:280.8px;font-size:11px;color:#1a1a1a;">9677.08</div>
<div class="t" style="left:25.7px;top:295.8px;font-size:11px;color:#1a1a1a;">Equity:</div>
<div class="t" style="left:-86px;width:300px;text-align:right;top:295.8px;font-size:11px;color:#1a1a1a;">9689.86</div>
<div class="t" style="left:383px;width:300px;text-align:right;top:295.8px;font-size:11px;color:#1a1a1a;">9689.86</div>
<div class="t" style="left:25.7px;top:309.8px;font-size:11px;color:#1a1a1a;">Floating PL:</div>
<div class="t" style="left:-86px;width:300px;text-align:right;top:309.8px;font-size:11px;color:#33997a;">12.78</div>
<div class="t" style="left:383px;width:300px;text-align:right;top:309.8px;font-size:11px;color:#1a1a1a;">12.78</div>
<div class="t" style="left:25.7px;top:324.8px;font-size:11px;color:#1a1a1a;">Floating PL %:</div>
<div class="t" style="left:-86px;width:300px;text-align:right;top:324.8px;font-size:11px;color:#33997a;">0.13%</div>
<div class="t" style="left:383px;width:300px;text-align:right;top:324.8px;font-size:11px;color:#33997a;">0.13%</div>
<div class="t" style="left:25.7px;top:338.8px;font-size:11px;color:#1a1a1a;">Used margin:</div>
<div class="t" style="left:-86px;width:300px;text-align:right;top:338.8px;font-size:11px;color:#1a1a1a;">3050.28</div>
<div class="t" style="left:383px;width:300px;text-align:right;top:338.8px;font-size:11px;color:#1a1a1a;">3050.28</div>
<div class="t" style="left:25.7px;top:353.8px;font-size:11px;color:#1a1a1a;">Free margin:</div>
<div class="t" style="left:-86px;width:300px;text-align:right;top:353.8px;font-size:11px;color:#1a1a1a;">6639.58</div>
<div class="t" style="left:383px;width:300px;text-align:right;top:353.8px;font-size:11px;color:#1a1a1a;">6639.58</div>
<div class="t" style="left:25.7px;top:367.8px;font-size:11px;color:#1a1a1a;">Margin use %:</div>
<div class="t" style="left:-86px;width:300px;text-align:right;top:367.8px;font-size:11px;color:#1a1a1a;">31.48%</div>
<div class="t" style="left:383px;width:300px;text-align:right;top:367.8px;font-size:11px;color:#1a1a1a;">31.48%</div>
<div class="t" style="left:25.7px;top:382.8px;font-size:11px;color:#1a1a1a;">Last update:</div>
<div class="t" style="left:-85.5px;width:300px;text-align:right;top:385px;font-size:8.4px;color:#111;letter-spacing:-0.62px">2019-07-08 13:31:24.520</div>
<div style="position:absolute;left:22px;top:235px;width:90px;height:17px;border:2px solid #217346;box-sizing:border-box"></div>
<div style="position:absolute;left:108px;top:248px;width:5px;height:5px;background:#217346;border:1px solid #fff"></div>
<svg style="position:absolute;left:24px;top:411px;" width="359" height="165" viewBox="0 0 359 165"><rect x="0.5" y="0.5" width="358" height="164" fill="#fff" stroke="#3a3a3a"/><text x="184" y="16" text-anchor="middle" font-family="Liberation Sans" font-weight="bold" font-size="10.4" fill="#111">Floating PL (cash)</text><path d="M39 35.5h307" stroke="#c4c4c4"/><path d="M36 35.5h3" stroke="#222"/><text x="32" y="38.3" text-anchor="end" font-family="Liberation Sans" font-size="9.3" fill="#000">14.00</text><path d="M39 50.5h307" stroke="#c4c4c4"/><path d="M36 50.5h3" stroke="#222"/><text x="32" y="53.3" text-anchor="end" font-family="Liberation Sans" font-size="9.3" fill="#000">12.00</text><path d="M39 64.5h307" stroke="#c4c4c4"/><path d="M36 64.5h3" stroke="#222"/><text x="32" y="67.3" text-anchor="end" font-family="Liberation Sans" font-size="9.3" fill="#000">10.00</text><path d="M39 79.5h307" stroke="#c4c4c4"/><path d="M36 79.5h3" stroke="#222"/><text x="32" y="82.3" text-anchor="end" font-family="Liberation Sans" font-size="9.3" fill="#000">8.00</text><path d="M39 94.5h307" stroke="#c4c4c4"/><path d="M36 94.5h3" stroke="#222"/><text x="32" y="97.3" text-anchor="end" font-family="Liberation Sans" font-size="9.3" fill="#000">6.00</text><path d="M39 109.5h307" stroke="#c4c4c4"/><path d="M36 109.5h3" stroke="#222"/><text x="32" y="112.3" text-anchor="end" font-family="Liberation Sans" font-size="9.3" fill="#000">4.00</text><path d="M39 123.5h307" stroke="#c4c4c4"/><path d="M36 123.5h3" stroke="#222"/><text x="32" y="126.3" text-anchor="end" font-family="Liberation Sans" font-size="9.3" fill="#000">2.00</text><path d="M39 138.5h307" stroke="#c4c4c4"/><path d="M36 138.5h3" stroke="#222"/><text x="32" y="141.3" text-anchor="end" font-family="Liberation Sans" font-size="9.3" fill="#000">0.00</text><path d="M346.5 35V138" stroke="#c0c0c0"/><path d="M39.5 35V138" stroke="#111"/><path d="M39 138.5H347" stroke="#111"/><path d="M39.5 138.5v3" stroke="#111"/><path d="M100.9 138.5v3" stroke="#111"/><path d="M162.3 138.5v3" stroke="#111"/><path d="M223.7 138.5v3" stroke="#111"/><path d="M285.1 138.5v3" stroke="#111"/><path d="M346.5 138.5v3" stroke="#111"/><rect x="57.5" y="43.5" width="25" height="95.5" fill="#9999ff" stroke="#111"/><text x="70" y="150.8" text-anchor="middle" font-family="Liberation Sans" font-size="9.3" fill="#000">17520562</text></svg>
<svg style="position:absolute;left:404px;top:411px;" width="348" height="167" viewBox="0 0 348 167"><rect x="0.5" y="0.5" width="347" height="166" fill="#fff" stroke="#3a3a3a"/><text x="176" y="16" text-anchor="middle" font-family="Liberation Sans" font-weight="bold" font-size="10.4" fill="#111">Margin usage %</text><path d="M45 35.5h290" stroke="#c4c4c4"/><path d="M42 35.5h3" stroke="#222"/><text x="38" y="38.3" text-anchor="end" font-family="Liberation Sans" font-size="9.3" fill="#000">100%</text><path d="M45 56.5h290" stroke="#c4c4c4"/><path d="M42 56.5h3" stroke="#222"/><text x="38" y="59.3" text-anchor="end" font-family="Liberation Sans" font-size="9.3" fill="#000">80%</text><path d="M45 77.5h290" stroke="#c4c4c4"/><path d="M42 77.5h3" stroke="#222"/><text x="38" y="80.3" text-anchor="end" font-family="Liberation Sans" font-size="9.3" fill="#000">60%</text><path d="M45 98.5h290" stroke="#c4c4c4"/><path d="M42 98.5h3" stroke="#222"/><text x="38" y="101.3" text-anchor="end" font-family="Liberation Sans" font-size="9.3" fill="#000">40%</text><path d="M45 119.5h290" stroke="#c4c4c4"/><path d="M42 119.5h3" stroke="#222"/><text x="38" y="122.3" text-anchor="end" font-family="Liberation Sans" font-size="9.3" fill="#000">20%</text><path d="M45 140.5h290" stroke="#c4c4c4"/><path d="M42 140.5h3" stroke="#222"/><text x="38" y="143.3" text-anchor="end" font-family="Liberation Sans" font-size="9.3" fill="#000">0%</text><path d="M335.5 35V140" stroke="#c0c0c0"/><path d="M45.5 35V140" stroke="#111"/><path d="M45 140.5H336" stroke="#111"/><path d="M45.5 140.5v3" stroke="#111"/><path d="M103.5 140.5v3" stroke="#111"/><path d="M161.5 140.5v3" stroke="#111"/><path d="M219.5 140.5v3" stroke="#111"/><path d="M277.5 140.5v3" stroke="#111"/><path d="M335.5 140.5v3" stroke="#111"/><rect x="63.5" y="106.5" width="23" height="34.5" fill="#9999ff" stroke="#111"/><text x="74" y="152.8" text-anchor="middle" font-family="Liberation Sans" font-size="9.3" fill="#000">17520562</text></svg>
<div style="position:absolute;left:0;top:0;width:1200px;height:720px;overflow:hidden">
<svg style="position:absolute;left:24px;top:585px;" width="359" height="205" viewBox="0 0 359 205"><rect x="0.5" y="0.5" width="358" height="204" fill="#fff" stroke="#3a3a3a"/><text x="184" y="17" text-anchor="middle" font-family="Liberation Sans" font-weight="bold" font-size="10.4" fill="#111">Floating PL %</text><path d="M50 35.5h296" stroke="#c4c4c4"/><path d="M47 35.5h3" stroke="#222"/><text x="43" y="38.3" text-anchor="end" font-family="Liberation Sans" font-size="9.3" fill="#000">10.0%</text><path d="M50 65.5h296" stroke="#c4c4c4"/><path d="M47 65.5h3" stroke="#222"/><text x="43" y="68.3" text-anchor="end" font-family="Liberation Sans" font-size="9.3" fill="#000">5.0%</text><path d="M50 94.5h296" stroke="#c4c4c4"/><path d="M47 94.5h3" stroke="#222"/><text x="43" y="97.3" text-anchor="end" font-family="Liberation Sans" font-size="9.3" fill="#000">0.0%</text><path d="M50 124.5h296" stroke="#c4c4c4"/><path d="M47 124.5h3" stroke="#222"/><text x="43" y="127.3" text-anchor="end" font-family="Liberation Sans" font-size="9.3" fill="#000">-5.0%</text><path d="M50 153.5h296" stroke="#c4c4c4"/><path d="M47 153.5h3" stroke="#222"/><text x="43" y="156.3" text-anchor="end" font-family="Liberation Sans" font-size="9.3" fill="#000">-10.0%</text><path d="M50 183.5h296" stroke="#c4c4c4"/><path d="M47 183.5h3" stroke="#222"/><text x="43" y="186.3" text-anchor="end" font-family="Liberation Sans" font-size="9.3" fill="#000">-15.0%</text><path d="M346.5 35V183" stroke="#c0c0c0"/><path d="M50.5 35V183" stroke="#111"/><path d="M50 94.5H347" stroke="#111"/><path d="M50.5 94.5v3" stroke="#111"/><path d="M109.7 94.5v3" stroke="#111"/><path d="M168.9 94.5v3" stroke="#111"/><path d="M228.1 94.5v3" stroke="#111"/><path d="M287.3 94.5v3" stroke="#111"/><path d="M346.5 94.5v3" stroke="#111"/><path d="M68 93.5h24" stroke="#111" stroke-width="1"/><text x="80" y="107.8" text-anchor="middle" font-family="Liberation Sans" font-size="9.3" fill="#000">17520562</text></svg>
</div>
<div style="position:absolute;left:1184px;top:224px;width:13px;height:13px;background:#fff;border:1px solid #c6c6c6;box-sizing:border-box"></div>
<svg style="position:absolute;left:1187px;top:228px;" width="7" height="4" viewBox="0 0 7 4"><path d="M0 4L3.5 0 7 4z" fill="#666"/></svg>
<div style="position:absolute;left:1184px;top:237px;width:13px;height:409px;background:#fff;border:1px solid #c6c6c6;border-top:none;box-sizing:border-box"></div>
<div style="position:absolute;left:1185px;top:646px;width:11px;height:62px;background:#dadada"></div>
<div style="position:absolute;left:1184px;top:708px;width:13px;height:12px;background:#fff;border:1px solid #c6c6c6;box-sizing:border-box"></div>
<svg style="position:absolute;left:1187px;top:712px;" width="7" height="4" viewBox="0 0 7 4"><path d="M0 0h7l-3.5 4z" fill="#666"/></svg>
<div style="position:absolute;left:2px;top:720px;width:1197px;height:23px;background:#e6e6e6"></div>
<div style="position:absolute;left:2px;top:720px;width:1197px;height:1px;background:#c6c6c6"></div>
<div style="position:absolute;left:2px;top:743px;width:1197px;height:2px;background:#cfcfcf"></div>
<div style="position:absolute;left:2px;top:745px;width:1197px;height:3px;background:#f3f3f3"></div>
<div style="position:absolute;left:347px;top:746px;width:615px;height:2px;background:#d2d2d2"></div>
<svg style="position:absolute;left:25px;top:728px;" width="4" height="7" viewBox="0 0 4 7"><path d="M4 0v7L0 3.5z" fill="#c4c4c4"/></svg>
<svg style="position:absolute;left:50px;top:728px;" width="4" height="7" viewBox="0 0 4 7"><path d="M0 0v7l4-3.5z" fill="#c4c4c4"/></svg>
<div style="position:absolute;left:87px;top:723px;width:1px;height:17px;background:#a6a6a6"></div>
<div style="position:absolute;left:290px;top:723px;width:1px;height:17px;background:#a6a6a6"></div>
<div style="position:absolute;left:341px;top:723px;width:1px;height:17px;background:#a6a6a6"></div>
<div style="position:absolute;left:418px;top:723px;width:1px;height:17px;background:#a6a6a6"></div>
<div style="position:absolute;left:155px;top:720px;width:79px;height:21px;background:#fff"></div>
<div style="position:absolute;left:155px;top:739px;width:79px;height:2px;background:#217346"></div>
<div class="t" style="left:99px;top:725px;font-size:10.7px;color:#555;">Accounts</div>
<div class="t" style="left:166px;top:725px;font-size:10.7px;color:#217346;font-weight:bold">Dashboard</div>
<div class="t" style="left:245px;top:725px;font-size:10.7px;color:#555;">Tickets</div>
<div class="t" style="left:301px;top:725px;font-size:10.7px;color:#555;">Prices</div>
<div class="t" style="left:353px;top:725px;font-size:10.7px;color:#555;">Bar history</div>
<svg style="position:absolute;left:446px;top:724px;" width="14" height="14" viewBox="0 0 14 14"><circle cx="7" cy="7" r="6.3" fill="none" stroke="#777" stroke-width="1.2"/><path d="M7 3.5v7M3.5 7h7" stroke="#777" stroke-width="1.4"/></svg>
<div style="position:absolute;left:720px;top:727px;width:1px;height:2px;background:#999"></div>
<div style="position:absolute;left:720px;top:731px;width:1px;height:2px;background:#999"></div>
<div style="position:absolute;left:720px;top:735px;width:1px;height:2px;background:#999"></div>
<div style="position:absolute;left:735px;top:726px;width:13px;height:13px;background:#fff;border:1px solid #c6c6c6;box-sizing:border-box"></div>
<svg style="position:absolute;left:739px;top:729px;" width="4" height="7" viewBox="0 0 4 7"><path d="M4 0v7L0 3.5z" fill="#555"/></svg>
<div style="position:absolute;left:747px;top:726px;width:395px;height:13px;background:#fff;border:1px solid #c6c6c6;border-left:none;box-sizing:border-box"></div>
<div style="position:absolute;left:1142px;top:727px;width:26px;height:11px;background:#dadada"></div>
<div style="position:absolute;left:1168px;top:726px;width:13px;height:13px;background:#fff;border:1px solid #c6c6c6;box-sizing:border-box"></div>
<svg style="position:absolute;left:1173px;top:729px;" width="4" height="7" viewBox="0 0 4 7"><path d="M0 0v7l4-3.5z" fill="#555"/></svg>
<div style="position:absolute;left:0px;top:0px;width:1px;height:748px;background:#111"></div>
<div style="position:absolute;left:1px;top:1px;width:1px;height:747px;background:#217346"></div>
<div style="position:absolute;left:1199px;top:1px;width:1px;height:747px;background:#217346"></div>
</body></html>
